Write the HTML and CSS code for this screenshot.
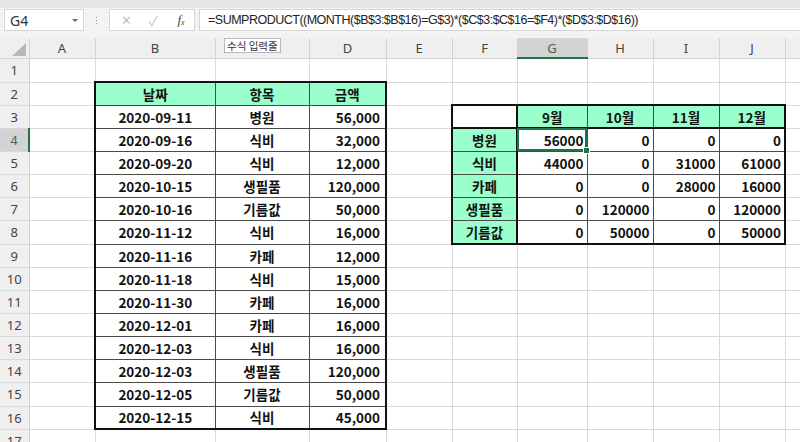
FILE: index.html
```html
<html>

<head>
    <meta charset="UTF-8">
    <link rel="stylesheet" href="styles.css">
</head>

<body>
    <div class="top"></div>
    <div class="fbar">
        <div class="namebox">
            <span>G4</span>
            <span class="arrow"></span>
        </div>
        <div class="dots"><i></i><i></i><i></i></div>
        <div class="btns">
            <span class="btn gray">&#x2715;</span>
            <span class="btn gray">&#x2713;</span>
            <span class="btn fx">f<sub>x</sub></span>
        </div>
        <div class="formula">=SUMPRODUCT((MONTH($B$3:$B$16)=G$3)*($C$3:$C$16=$F4)*($D$3:$D$16))</div>
        <div class="tip">수식 입력줄</div>
    </div>

    <table class="sheet">
        <colgroup>
            <col class="c-rh">
            <col class="c-a">
            <col class="c-b">
            <col class="c-c">
            <col class="c-d">
            <col class="c-e">
            <col class="c-f">
            <col class="c-g">
            <col class="c-h">
            <col class="c-i">
            <col class="c-j">
            <col class="c-k">
        </colgroup>
        <tr class="hrow">
            <th class="corner"><span class="tri"></span></th>
            <th>A</th><th>B</th><th>C</th><th>D</th><th>E</th><th>F</th>
            <th class="sel-col">G</th><th>H</th><th>I</th><th>J</th><th></th>
        </tr>
        <tr class="r1">
            <th class="rh">1</th>
            <td></td><td></td><td></td><td></td><td></td><td></td><td></td><td></td><td></td><td></td><td></td>
        </tr>
        <tr>
            <th class="rh">2</th>
            <td></td>
            <td class="t1 hd bt bl">날짜</td><td class="t1 hd bt">항목</td><td class="t1 hd bt br">금액</td>
            <td></td><td></td><td></td><td></td><td></td><td></td><td></td>
        </tr>
        <tr>
            <th class="rh">3</th>
            <td></td>
            <td class="t1 bl">2020-09-11</td><td class="t1">병원</td><td class="t1 num br">56,000</td>
            <td></td>
            <td class="t2 bt bl bb2"></td><td class="t2 hd bt bl bb2">9월</td><td class="t2 hd bt bb2">10월</td><td class="t2 hd bt bb2">11월</td><td class="t2 hd bt br bb2">12월</td>
            <td></td>
        </tr>
        <tr>
            <th class="rh sel-row">4</th>
            <td></td>
            <td class="t1 bl">2020-09-16</td><td class="t1">식비</td><td class="t1 num br">32,000</td>
            <td></td>
            <td class="t2 hd bl br">병원</td><td class="t2 num active">56000</td><td class="t2 num">0</td><td class="t2 num">0</td><td class="t2 num br">0</td>
            <td></td>
        </tr>
        <tr>
            <th class="rh">5</th>
            <td></td>
            <td class="t1 bl">2020-09-20</td><td class="t1">식비</td><td class="t1 num br">12,000</td>
            <td></td>
            <td class="t2 hd bl br">식비</td><td class="t2 num">44000</td><td class="t2 num">0</td><td class="t2 num">31000</td><td class="t2 num br">61000</td>
            <td></td>
        </tr>
        <tr>
            <th class="rh">6</th>
            <td></td>
            <td class="t1 bl">2020-10-15</td><td class="t1">생필품</td><td class="t1 num br">120,000</td>
            <td></td>
            <td class="t2 hd bl br">카페</td><td class="t2 num">0</td><td class="t2 num">0</td><td class="t2 num">28000</td><td class="t2 num br">16000</td>
            <td></td>
        </tr>
        <tr>
            <th class="rh">7</th>
            <td></td>
            <td class="t1 bl">2020-10-16</td><td class="t1">기름값</td><td class="t1 num br">50,000</td>
            <td></td>
            <td class="t2 hd bl br">생필품</td><td class="t2 num">0</td><td class="t2 num">120000</td><td class="t2 num">0</td><td class="t2 num br">120000</td>
            <td></td>
        </tr>
        <tr class="tall">
            <th class="rh">8</th>
            <td></td>
            <td class="t1 bl">2020-11-12</td><td class="t1">식비</td><td class="t1 num br">16,000</td>
            <td></td>
            <td class="t2 hd bl br bb">기름값</td><td class="t2 num bb">0</td><td class="t2 num bb">50000</td><td class="t2 num bb">0</td><td class="t2 num br bb">50000</td>
            <td></td>
        </tr>
        <tr>
            <th class="rh">9</th>
            <td></td>
            <td class="t1 bl">2020-11-16</td><td class="t1">카페</td><td class="t1 num br">12,000</td>
            <td></td><td></td><td></td><td></td><td></td><td></td><td></td>
        </tr>
        <tr>
            <th class="rh">10</th>
            <td></td>
            <td class="t1 bl">2020-11-18</td><td class="t1">식비</td><td class="t1 num br">15,000</td>
            <td></td><td></td><td></td><td></td><td></td><td></td><td></td>
        </tr>
        <tr>
            <th class="rh">11</th>
            <td></td>
            <td class="t1 bl">2020-11-30</td><td class="t1">카페</td><td class="t1 num br">16,000</td>
            <td></td><td></td><td></td><td></td><td></td><td></td><td></td>
        </tr>
        <tr>
            <th class="rh">12</th>
            <td></td>
            <td class="t1 bl">2020-12-01</td><td class="t1">카페</td><td class="t1 num br">16,000</td>
            <td></td><td></td><td></td><td></td><td></td><td></td><td></td>
        </tr>
        <tr>
            <th class="rh">13</th>
            <td></td>
            <td class="t1 bl">2020-12-03</td><td class="t1">식비</td><td class="t1 num br">16,000</td>
            <td></td><td></td><td></td><td></td><td></td><td></td><td></td>
        </tr>
        <tr>
            <th class="rh">14</th>
            <td></td>
            <td class="t1 bl">2020-12-03</td><td class="t1">생필품</td><td class="t1 num br">120,000</td>
            <td></td><td></td><td></td><td></td><td></td><td></td><td></td>
        </tr>
        <tr class="tall">
            <th class="rh">15</th>
            <td></td>
            <td class="t1 bl">2020-12-05</td><td class="t1">기름값</td><td class="t1 num br">50,000</td>
            <td></td><td></td><td></td><td></td><td></td><td></td><td></td>
        </tr>
        <tr>
            <th class="rh">16</th>
            <td></td>
            <td class="t1 bl bb">2020-12-15</td><td class="t1 bb">식비</td><td class="t1 num br bb">45,000</td>
            <td></td><td></td><td></td><td></td><td></td><td></td><td></td>
        </tr>
        <tr>
            <th class="rh">17</th>
            <td></td><td></td><td></td><td></td><td></td><td></td><td></td><td></td><td></td><td></td><td></td>
        </tr>
    </table>
</body>

</html>
```

FILE: styles.css
```css
* {
    box-sizing: border-box;
}
body {
    margin: 0;
    width: 800px;
    height: 442px;
    overflow: hidden;
    background: #ffffff;
    font-family: "Noto Sans", "Noto Sans CJK KR", sans-serif;
}
.top {
    height: 8px;
    background: #e6e6e6;
}
.fbar {
    position: relative;
    display: flex;
    align-items: center;
    height: 30px;
    padding: 1px 0 7px 0;
    background: #f3f3f3;
}
.namebox {
    display: flex;
    align-items: center;
    justify-content: space-between;
    width: 80px;
    height: 22px;
    margin-left: 4px;
    padding: 0 5px 0 5px;
    background: #ffffff;
    border: 1px solid #d6d6d6;
    font-size: 14px;
    color: #333333;
}
.arrow {
    width: 0;
    height: 0;
    border-left: 3px solid transparent;
    border-right: 3px solid transparent;
    border-top: 3px solid #666666;
}
.dots {
    display: flex;
    flex-direction: column;
    gap: 2px;
    width: 25px;
    align-items: center;
}
.dots i {
    display: block;
    width: 1px;
    height: 1px;
    background: #9a9a9a;
}
.btns {
    display: flex;
    align-items: center;
    justify-content: space-between;
    width: 86px;
    height: 22px;
    padding: 0 6px 0 9px;
    background: #ffffff;
    border: 1px solid #d6d6d6;
}
.btn {
    font-size: 13px;
    width: 14px;
    text-align: center;
}
.gray {
    color: #c2c2c2;
}
.fx {
    font-family: "Liberation Serif", serif;
    font-style: italic;
    font-size: 13px;
    color: #444444;
}
.fx sub {
    font-size: 8px;
    vertical-align: -1px;
}
.formula {
    flex: 1;
    height: 22px;
    margin-left: 4px;
    padding: 0 0 0 8px;
    background: #ffffff;
    border: 1px solid #d6d6d6;
    border-right: none;
    font-family: "Liberation Sans", sans-serif;
    font-size: 12.5px;
    letter-spacing: -0.5px;
    line-height: 20px;
    color: #222222;
    white-space: nowrap;
    overflow: hidden;
}
.tip {
    position: absolute;
    left: 224px;
    top: 30px;
    height: 15px;
    padding: 0 2px;
    background: #ffffff;
    border: 1px solid #b9b9b9;
    font-family: "Noto Sans CJK KR", sans-serif;
    font-size: 10.5px;
    line-height: 13px;
    color: #333333;
    z-index: 2;
}

.sheet {
    table-layout: fixed;
    border-collapse: collapse;
    width: 851px;
}
.c-rh { width: 29px; }
.c-a { width: 66px; }
.c-b { width: 120px; }
.c-c { width: 94px; }
.c-d { width: 77px; }
.c-e { width: 66px; }
.c-f { width: 65px; }
.c-g { width: 70px; }
.c-h { width: 66px; }
.c-i { width: 66px; }
.c-j { width: 66px; }
.c-k { width: 66px; }

.sheet td {
    height: 23px;
    padding: 0;
    border: 1px solid #d9d9d9;
    font-family: "Noto Sans CJK KR", sans-serif;
    font-weight: bold;
    font-size: 13.5px;
    color: #111111;
    text-align: center;
    white-space: nowrap;
}
.sheet tr.r1 td,
.sheet tr.r1 th {
    height: 24px;
}
.sheet tr.tall td,
.sheet tr.tall th {
    height: 24px;
}
.hrow th {
    height: 20px;
    padding: 0;
    background: #efefef;
    border: none;
    border-left: 1px solid #d4d4d4;
    border-bottom: 1px solid #d4d4d4;
    font-weight: normal;
    font-size: 13px;
    color: #444444;
}
.hrow th.corner {
    position: relative;
    border-left: none;
}
.tri {
    position: absolute;
    right: 3px;
    bottom: 2px;
    width: 0;
    height: 0;
    border-left: 14px solid transparent;
    border-bottom: 13px solid #b8b8b8;
}
.hrow th.sel-col {
    background: #d3d3d3;
    border-bottom: 2px solid #217346;
    color: #3c6b55;
}
.rh {
    padding: 0;
    background: #efefef;
    border: none;
    border-bottom: 1px solid #d9d9d9;
    border-right: 1px solid #cfcfcf;
    font-weight: normal;
    font-size: 13px;
    color: #444444;
}
.rh.sel-row {
    background: #d3d3d3;
    border-right: 2px solid #217346;
    color: #3c6b55;
}

.sheet td.t1,
.sheet td.t2 {
    border: 1px solid #4a4a4a;
}
.sheet td.hd {
    background: #99ffcc;
}
.sheet td.num {
    text-align: right;
    padding-right: 5px;
}
.sheet td.t2.num {
    padding-right: 3px;
}
.sheet td.bt { border-top: 2px solid #111111; }
.sheet td.bb { border-bottom: 2px solid #111111; }
.sheet td.bb2 { border-bottom: 2px solid #111111; }
.sheet td.bl { border-left: 2px solid #111111; }
.sheet td.br { border-right: 2px solid #111111; }

.sheet td.active {
    position: relative;
    outline: 2px solid #217346;
    outline-offset: -2px;
}
.sheet td.active::after {
    content: "";
    position: absolute;
    right: -3px;
    bottom: -3px;
    width: 5px;
    height: 5px;
    background: #217346;
    border: 1px solid #ffffff;
}
```
